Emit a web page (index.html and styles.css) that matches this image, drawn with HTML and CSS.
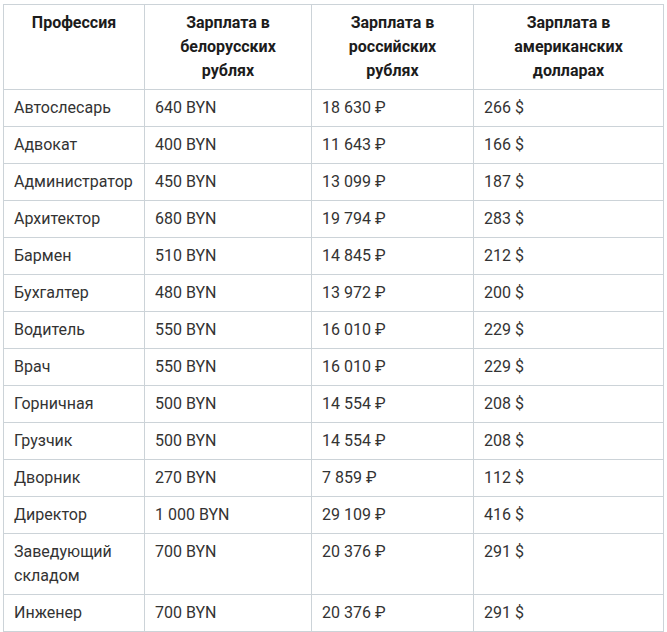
FILE: index.html
```html
<!DOCTYPE html>
<html lang="ru">
<head>
<meta charset="utf-8">
<link rel="stylesheet" href="styles.css">
</head>
<body>
<table class="salary">
<colgroup>
<col class="c1"><col class="c2"><col class="c3"><col class="c4">
</colgroup>
<thead>
<tr><th>Профессия</th><th>Зарплата в белорусских рублях</th><th>Зарплата в российских рублях</th><th>Зарплата в американских долларах</th></tr>
</thead>
<tbody>
<tr><td>Автослесарь</td><td>640 BYN</td><td>18 630 ₽</td><td>266 $</td></tr>
<tr><td>Адвокат</td><td>400 BYN</td><td>11 643 ₽</td><td>166 $</td></tr>
<tr><td>Администратор</td><td>450 BYN</td><td>13 099 ₽</td><td>187 $</td></tr>
<tr><td>Архитектор</td><td>680 BYN</td><td>19 794 ₽</td><td>283 $</td></tr>
<tr><td>Бармен</td><td>510 BYN</td><td>14 845 ₽</td><td>212 $</td></tr>
<tr><td>Бухгалтер</td><td>480 BYN</td><td>13 972 ₽</td><td>200 $</td></tr>
<tr><td>Водитель</td><td>550 BYN</td><td>16 010 ₽</td><td>229 $</td></tr>
<tr><td>Врач</td><td>550 BYN</td><td>16 010 ₽</td><td>229 $</td></tr>
<tr><td>Горничная</td><td>500 BYN</td><td>14 554 ₽</td><td>208 $</td></tr>
<tr><td>Грузчик</td><td>500 BYN</td><td>14 554 ₽</td><td>208 $</td></tr>
<tr><td>Дворник</td><td>270 BYN</td><td>7 859 ₽</td><td>112 $</td></tr>
<tr><td>Директор</td><td>1 000 BYN</td><td>29 109 ₽</td><td>416 $</td></tr>
<tr><td>Заведующий складом</td><td>700 BYN</td><td>20 376 ₽</td><td>291 $</td></tr>
<tr><td>Инженер</td><td>700 BYN</td><td>20 376 ₽</td><td>291 $</td></tr>
</tbody>
</table>
</body>
</html>
```
FILE: styles.css
```css
html, body {
  margin: 0;
  padding: 0;
  background: #ffffff;
}
body {
  padding: 4px 0 0 3px;
  font-family: Roboto, "Liberation Sans", Arial, sans-serif;
  font-size: 16px;
  color: #222222;
}
.salary {
  border-collapse: collapse;
  table-layout: fixed;
  width: 660px;
}
.c1 { width: 141px; }
.c2 { width: 167px; }
.c3 { width: 162px; }
.c4 { width: 190px; }
.salary th,
.salary td {
  border: 1px solid #ccd3d8;
  padding: 6px 10px;
  line-height: 24px;
  vertical-align: top;
}
.salary th {
  font-weight: 700;
  text-align: center;
  color: #1c1c1c;
}
.salary td {
  text-align: left;
  font-weight: 400;
  color: #333333;
}
```
